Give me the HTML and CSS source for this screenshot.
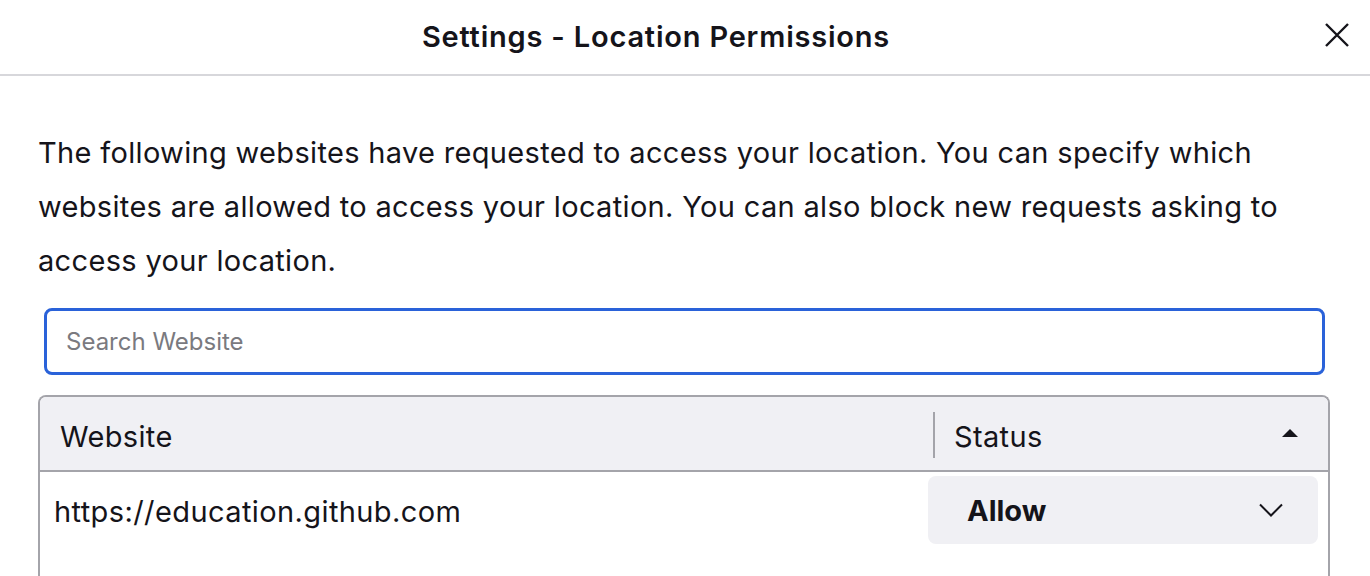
FILE: index.html
```html
<!DOCTYPE html>
<html>
<head>
<meta charset="utf-8">
<link rel="stylesheet" href="styles.css">
</head>
<body>
<div class="dialog">
  <header class="titlebar">
    <h1 class="title">Settings - Location Permissions</h1>
    <button class="close" aria-label="Close">
      <svg width="26" height="26" viewBox="0 0 26 26"><path d="M2 2L24 24M24 2L2 24" stroke="#15141a" stroke-width="2.4" fill="none"/></svg>
    </button>
  </header>
  <main class="content">
    <p class="desc">The following websites have requested to access your location. You can specify which websites are allowed to access your location. You can also block new requests asking to access your location.</p>
    <div class="search">Search Website</div>
    <div class="table">
      <div class="thead">
        <div class="th th-site">Website</div>
        <div class="th th-status"><span class="th-label">Status</span>
          <svg class="sort" width="16" height="8" viewBox="0 0 16 8"><path d="M8 0L16 8H0Z" fill="#15141a"/></svg>
        </div>
      </div>
      <div class="row">
        <div class="cell-site">https://education.github.com</div>
        <div class="select"><span>Allow</span>
          <svg width="24" height="14" viewBox="0 0 24 14"><path d="M1 1.5L12 12.5L23 1.5" stroke="#15141a" stroke-width="2" fill="none"/></svg>
        </div>
      </div>
    </div>
  </main>
</div>
</body>
</html>
```

FILE: styles.css
```css
html, body {
  margin: 0;
  padding: 0;
  background: #ffffff;
  color: #15141a;
  font-family: Inter, "Noto Sans", sans-serif;
}
.dialog {
  width: 1370px;
  height: 576px;
  overflow: hidden;
}
.titlebar {
  height: 74px;
  border-bottom: 2px solid #d7d7db;
  display: flex;
  align-items: center;
  justify-content: center;
  padding-right: 58px;
  position: relative;
}
.title {
  margin: 0 0 2px 0;
  font-size: 29px;
  font-weight: 600;
  letter-spacing: 0.8px;
}
.close {
  position: absolute;
  right: 20px;
  top: 22px;
  border: 0;
  background: none;
  padding: 0;
  width: 26px;
  height: 26px;
}
.content {
  padding: 0 40px 0 38px;
}
.desc {
  margin: -74px 0 0 0;
  padding-top: 124px;
  font-size: 29px;
  line-height: 54px;
  letter-spacing: 0.33px;
}
.search {
  margin: 20px 5px 0 6px;
  height: 61px;
  border: 3px solid #2a62d9;
  border-radius: 8px;
  display: flex;
  align-items: center;
  padding-left: 19px;
  font-size: 24px;
  color: #7a7a7f;
}
.table {
  margin-top: 20px;
  border: 2px solid #a4a4aa;
  border-bottom: 0;
  border-radius: 8px 8px 0 0;
  height: 200px;
}
.thead {
  height: 73px;
  background: #f0f0f4;
  border-bottom: 2px solid #a4a4aa;
  border-radius: 6px 6px 0 0;
  display: flex;
  align-items: center;
}
.th {
  font-size: 29px;
  letter-spacing: 0.35px;
}
.th-site {
  box-sizing: border-box;
  width: 893px;
  padding-left: 20px;
  padding-top: 6px;
}
.th-status {
  flex: 1;
  display: flex;
  align-items: center;
  justify-content: space-between;
  border-left: 2px solid #a4a4aa;
  height: 46px;
  margin-top: 3px;
  padding: 0 30px 0 19px;
}
.th-label {
  position: relative;
  top: 1px;
}
.sort {
  position: relative;
  top: -2px;
}
.row {
  display: flex;
  align-items: flex-start;
  padding: 4px 10px 0 14px;
}
.cell-site {
  font-size: 29px;
  flex: 1;
  line-height: 68px;
  padding-top: 2px;
  letter-spacing: 0.4px;
}
.select {
  width: 390px;
  height: 68px;
  box-sizing: border-box;
  background: #f0f0f4;
  border-radius: 8px;
  display: flex;
  align-items: center;
  justify-content: space-between;
  padding: 0 35px 0 39px;
  font-size: 29px;
  font-weight: 700;
}
```
